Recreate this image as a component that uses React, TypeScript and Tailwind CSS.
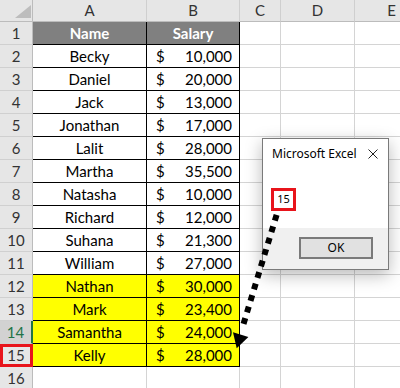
import React from "react";

const rows: [string, string][] = [
  ["Becky", "10,000"],
  ["Daniel", "20,000"],
  ["Jack", "13,000"],
  ["Jonathan", "17,000"],
  ["Lalit", "28,000"],
  ["Martha", "35,500"],
  ["Natasha", "10,000"],
  ["Richard", "12,000"],
  ["Suhana", "21,300"],
  ["William", "27,000"],
  ["Nathan", "30,000"],
  ["Mark", "23,400"],
  ["Samantha", "24,000"],
  ["Kelly", "28,000"],
];

const font = { fontFamily: "Lato, 'Open Sans', sans-serif" };

function RowHead({ n }: { n: number }) {
  const active = n === 14;
  const marked = n === 15;
  return (
    <div
      className={
        "flex items-center justify-center border-b border-[#d0d0d0] text-[15px] " +
        (active
          ? "border-r-2 border-r-[#217346] bg-[#d2d2d2] text-[#217346]"
          : "border-r border-r-[#bcbcbc] bg-[#e6e6e6] text-[#333]") +
        (marked ? " outline-[3px] outline-[#e8141b] -outline-offset-[3px]" : "")
      }
    >
      {n}
    </div>
  );
}

function EmptyCells() {
  return (
    <>
      <div className="border-b border-r border-[#d4d4d4] bg-white" />
      <div className="border-b border-r border-[#d4d4d4] bg-white" />
      <div className="border-b border-r border-[#d4d4d4] bg-white" />
    </>
  );
}

export default function App() {
  return (
    <div className="relative h-[388px] w-[400px] overflow-hidden bg-white" style={font}>
      <div className="grid grid-cols-[33px_114px_93px_41px_74px_74px] grid-rows-[22px_repeat(16,23px)]">
        {/* column header row */}
        <div className="relative border-b border-r border-[#bcbcbc] bg-[#e6e6e6]">
          <svg className="absolute inset-0" width="33" height="22">
            <polygon points="31,5 31,18 15,18" fill="#bdbdbd" />
          </svg>
        </div>
        {["A", "B", "C", "D", "E"].map((c) => (
          <div
            key={c}
            className="flex items-center justify-center border-b border-r border-b-[#bcbcbc] border-r-[#cfcfcf] bg-[#e6e6e6] text-[15px] text-[#333]"
          >
            {c}
          </div>
        ))}

        {/* row 1: table header */}
        <RowHead n={1} />
        <div className="flex items-center justify-center border-b border-r border-black bg-[#808080] text-[15px] font-bold text-white">
          Name
        </div>
        <div className="flex items-center justify-center border-b border-r border-black bg-[#808080] text-[15px] font-bold text-white">
          Salary
        </div>
        <EmptyCells />

        {rows.map(([name, pay], i) => {
          const n = i + 2;
          const bg = n >= 12 ? "bg-[#ffff00]" : "bg-white";
          return (
            <React.Fragment key={n}>
              <RowHead n={n} />
              <div className={"flex items-center justify-center border-b border-r border-black text-[15px] text-black " + bg}>
                {name}
              </div>
              <div className={"flex items-center justify-between border-b border-r border-black pl-[9px] pr-[7px] text-[15px] text-black " + bg}>
                <span>$</span>
                <span>{pay}</span>
              </div>
              <EmptyCells />
            </React.Fragment>
          );
        })}

        <RowHead n={16} />
        <div className="border-b border-r border-[#d4d4d4]" />
        <div className="border-b border-r border-[#d4d4d4]" />
        <EmptyCells />
      </div>

      {/* message box */}
      <div
        className="absolute left-[262px] top-[138px] flex w-[127px] flex-col border border-[#7a7a7a] bg-white shadow-[0_5px_16px_rgba(0,0,0,0.28)]"
        style={{ fontFamily: "'Noto Sans', 'Open Sans', sans-serif" }}
      >
        <div className="flex h-[30px] items-center justify-between pl-[9px] pr-[10px] text-[12px] text-black">
          <span>Microsoft Excel</span>
          <svg width="10" height="10" viewBox="0 0 10 10">
            <path d="M0.5 0.5 L9.5 9.5 M9.5 0.5 L0.5 9.5" stroke="#222" strokeWidth="1" />
          </svg>
        </div>
        <div className="h-[59px] pl-[8px] pt-[19px]">
          <div className="flex h-[23px] w-[25px] items-center justify-center border-[3px] border-[#e8141b] text-[11px] text-black">
            15
          </div>
        </div>
        <div className="flex h-[41px] justify-end bg-[#f0f0f0] pr-[15px] pt-[9px]">
          <div className="flex h-[22px] w-[74px] items-center justify-center border-2 border-[#7a7a7a] bg-[#e1e1e1] text-[12px] text-black">
            OK
          </div>
        </div>
      </div>

      {/* dotted arrow */}
      <svg className="pointer-events-none absolute inset-0" width="400" height="388">
        <line x1="276.6" y1="214.8" x2="243.2" y2="325" stroke="#000" strokeWidth="6" strokeDasharray="6 6" />
        <polygon points="233,332.3 248.4,336.9 236.7,348.3" fill="#000" />
      </svg>
    </div>
  );
}
